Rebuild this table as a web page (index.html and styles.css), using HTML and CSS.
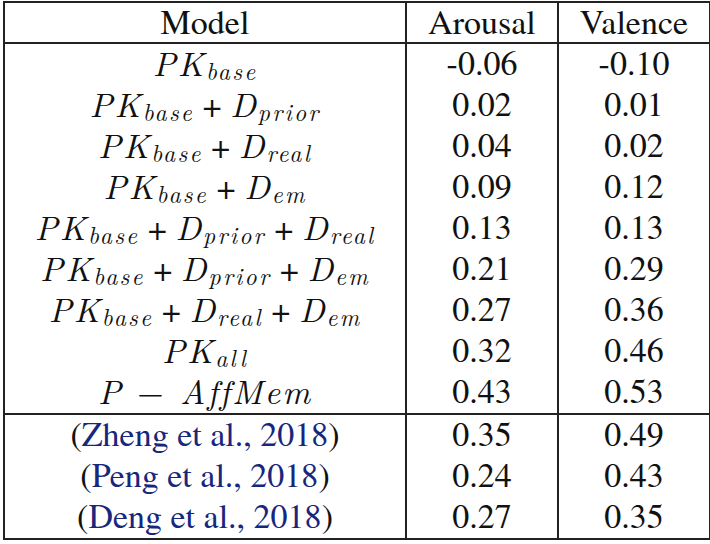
FILE: index.html
```html
<!DOCTYPE html>
<html>
<head>
<meta charset="utf-8">
<link rel="stylesheet" href="styles.css">
</head>
<body>
<table class="results">
  <thead>
    <tr><th class="c-model">Model</th><th class="c-num">Arousal</th><th class="c-num">Valence</th></tr>
  </thead>
  <tbody class="group">
    <tr><td><span class="m">PK<sub>base</sub></span></td><td>-0.06</td><td>-0.10</td></tr>
    <tr><td><span class="m">PK<sub>base</sub></span> + <span class="m">D<sub>prior</sub></span></td><td>0.02</td><td>0.01</td></tr>
    <tr><td><span class="m">PK<sub>base</sub></span> + <span class="m">D<sub>real</sub></span></td><td>0.04</td><td>0.02</td></tr>
    <tr><td><span class="m">PK<sub>base</sub></span> + <span class="m">D<sub>em</sub></span></td><td>0.09</td><td>0.12</td></tr>
    <tr><td><span class="m">PK<sub>base</sub></span> + <span class="m">D<sub>prior</sub></span> + <span class="m">D<sub>real</sub></span></td><td>0.13</td><td>0.13</td></tr>
    <tr><td><span class="m">PK<sub>base</sub></span> + <span class="m">D<sub>prior</sub></span> + <span class="m">D<sub>em</sub></span></td><td>0.21</td><td>0.29</td></tr>
    <tr><td><span class="m">PK<sub>base</sub></span> + <span class="m">D<sub>real</sub></span> + <span class="m">D<sub>em</sub></span></td><td>0.27</td><td>0.36</td></tr>
    <tr><td><span class="m">PK<sub>all</sub></span></td><td>0.32</td><td>0.46</td></tr>
    <tr><td><span class="m">P <span class="op">−</span> <span class="sp">AffMem</span></span></td><td>0.43</td><td>0.53</td></tr>
  </tbody>
  <tbody class="group">
    <tr><td>(<span class="cite">Zheng et al., 2018</span>)</td><td>0.35</td><td>0.49</td></tr>
    <tr><td>(<span class="cite">Peng et al., 2018</span>)</td><td>0.24</td><td>0.43</td></tr>
    <tr><td>(<span class="cite">Deng et al., 2018</span>)</td><td>0.27</td><td>0.35</td></tr>
  </tbody>
</table>
</body>
</html>
```
FILE: styles.css
```css
html, body {
  margin: 0;
  padding: 0;
  background: #fff;
}
body {
  padding: 1px 0 0 3px;
  font-family: "TeX Gyre Termes", serif;
  color: #111;
}
.results {
  border-collapse: collapse;
  width: 704px;
  table-layout: fixed;
  border: 2px solid #222;
}
.results th,
.results td {
  border-left: 2px solid #222;
  border-right: 2px solid #222;
  text-align: center;
  vertical-align: top;
  font-family: "TeX Gyre Termes", serif;
  font-weight: normal;
  font-size: 34px;
  height: 41px;
  padding: 0;
  line-height: 36px;
  white-space: nowrap;
}
.results thead th { height: 39px; }
.results th.c-model { width: 400px; }
.results th.c-num { width: 150px; }
.results thead tr { border-bottom: 2px solid #222; }
.results tbody.group + tbody.group { border-top: 2px solid #222; }
.m {
  font-family: "Latin Modern Roman", "LM Roman 10", serif;
  font-style: italic;
  font-size: 34px;
  letter-spacing: 2px;
}
.m sub {
  font-size: 0.7em;
  vertical-align: -0.17em;
  line-height: 0;
  letter-spacing: 2.2px;
}
.op {
  font-style: normal;
}
.cite {
  color: #17277c;
}
```
